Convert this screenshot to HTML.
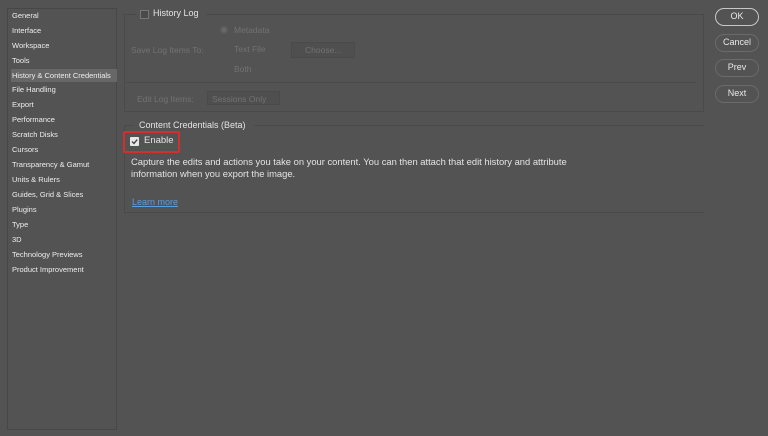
<!DOCTYPE html>
<html><head><meta charset="utf-8"><style>
*{margin:0;padding:0;box-sizing:border-box}
body{width:768px;height:436px;background:#535353;font-family:"Liberation Sans",sans-serif;color:#e6e6e6;position:relative;overflow:hidden}
.a{position:absolute;white-space:nowrap}
.side{left:7px;top:8px;width:110px;height:422px;border:1px solid #474747;background:#535353}
.it{position:absolute;left:3px;font-size:7.5px;color:#eee;height:13px;line-height:13px;padding-left:1px;width:106px}
.sel{background:#676767}
.box{border:1px solid #4a4a4a}
.dim{color:#727272;font-size:8.5px}
.btn{position:absolute;left:715px;width:44px;height:18px;border:1.5px solid #6a6a6a;border-radius:9px;font-size:9px;text-align:center;line-height:15px;color:#e8e8e8}
.t{font-size:8.5px;color:#e4e4e4}
</style></head><body>
<div class="a side">
<div class="it" style="top:0px">General</div>
<div class="it" style="top:15px">Interface</div>
<div class="it" style="top:30px">Workspace</div>
<div class="it" style="top:45px">Tools</div>
<div class="it sel" style="top:60px">History &amp; Content Credentials</div>
<div class="it" style="top:74px">File Handling</div>
<div class="it" style="top:89px">Export</div>
<div class="it" style="top:104px">Performance</div>
<div class="it" style="top:119px">Scratch Disks</div>
<div class="it" style="top:134px">Cursors</div>
<div class="it" style="top:149px">Transparency &amp; Gamut</div>
<div class="it" style="top:164px">Units &amp; Rulers</div>
<div class="it" style="top:179px">Guides, Grid &amp; Slices</div>
<div class="it" style="top:194px">Plugins</div>
<div class="it" style="top:209px">Type</div>
<div class="it" style="top:224px">3D</div>
<div class="it" style="top:239px">Technology Previews</div>
<div class="it" style="top:254px">Product Improvement</div>
</div>

<div class="a box" style="left:124px;top:14px;width:580px;height:98px"></div>
<div class="a" style="left:126px;top:82px;width:570px;height:1px;background:#4a4a4a"></div>
<div class="a" style="left:136px;top:8px;width:70px;height:12px;background:#535353"></div>
<div class="a" style="left:140px;top:10px;width:9px;height:9px;border:1px solid #777;background:#4a4a4a"></div>
<div class="a t" style="left:153px;top:8px;font-size:9px">History Log</div>
<div class="a" style="left:220px;top:26px;width:8px;height:8px;border-radius:50%;background:#6a6a6a;border:2px solid #5e5e5e"></div>
<div class="a dim" style="left:234px;top:25px">Metadata</div>
<div class="a dim" style="left:131px;top:45px">Save Log Items To:</div>
<div class="a dim" style="left:234px;top:44px">Text File</div>
<div class="a" style="left:291px;top:42px;width:64px;height:16px;background:#4f4f4f;border:1px solid #4a4a4a"></div>
<div class="a dim" style="left:305px;top:45px">Choose...</div>
<div class="a dim" style="left:234px;top:64px">Both</div>
<div class="a dim" style="left:137px;top:94px">Edit Log Items:</div>
<div class="a" style="left:207px;top:91px;width:73px;height:14px;background:#4f4f4f;border:1px solid #4a4a4a"></div>
<div class="a dim" style="left:212px;top:94px">Sessions Only</div>

<div class="a" style="left:124px;top:125px;width:580px;height:1px;background:#4a4a4a"></div>
<div class="a" style="left:124px;top:125px;width:1px;height:88px;background:#4a4a4a"></div>
<div class="a" style="left:124px;top:212px;width:580px;height:1px;background:#4a4a4a"></div>
<div class="a" style="left:134px;top:119px;width:120px;height:12px;background:#535353"></div>
<div class="a t" style="left:139px;top:120px;font-size:9px">Content Credentials (Beta)</div>
<div class="a" style="left:123px;top:131px;width:57px;height:22px;border:2px solid #d32f2f;border-radius:2px"></div>
<div class="a" style="left:130px;top:137px;width:9px;height:9px;background:#e8e8e8;border-radius:1px"></div>
<svg class="a" style="left:130px;top:137px" width="9" height="9"><path d="M2 4.5 L4 6.5 L7.2 2.6" stroke="#444" stroke-width="1.4" fill="none"/></svg>
<div class="a t" style="left:144px;top:135px;font-size:9.5px">Enable</div>
<div class="a t" style="left:131px;top:156px;line-height:11.5px;font-size:9.4px">Capture the edits and actions you take on your content. You can then attach that edit history and attribute<br>information when you export the image.</div>
<div class="a" style="left:132px;top:197px;font-size:9px;color:#5a9ee0;text-decoration:underline">Learn more</div>

<div class="btn" style="top:8px;border-color:#c8c8c8">OK</div>
<div class="btn" style="top:34px">Cancel</div>
<div class="btn" style="top:59px">Prev</div>
<div class="btn" style="top:85px">Next</div>
</body></html>
